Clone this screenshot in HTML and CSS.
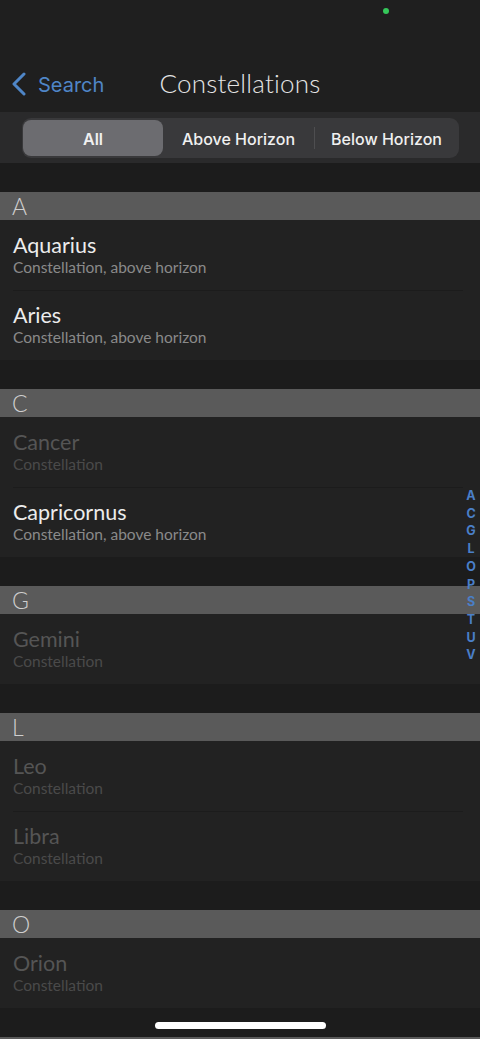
FILE: index.html
```html
<!DOCTYPE html>
<html lang="en">
<head>
<meta charset="utf-8">
<title>Constellations</title>
<link rel="stylesheet" href="styles.css">
</head>
<body>
<div class="screen">
  <div class="status"><span class="dot"></span></div>
  <header class="nav">
    <a class="back">
      <svg class="chevron" width="16" height="24" viewBox="0 0 16 24"><path d="M13 2 L3 12 L13 22" fill="none" stroke="#4f86c7" stroke-width="3" stroke-linecap="round" stroke-linejoin="round"/></svg>
      <span>Search</span>
    </a>
    <h1 class="title">Constellations</h1>
    <span></span>
  </header>
  <div class="toolbar">
    <div class="segmented">
      <div class="seg selected">All</div>
      <div class="seg">Above Horizon</div>
      <div class="divider"></div>
      <div class="seg">Below Horizon</div>
    </div>
  </div>
  <div class="list">
    <section class="section">
      <div class="section-header">A</div>
      <div class="row"><div class="row-title">Aquarius</div><div class="row-sub">Constellation, above horizon</div></div>
      <div class="row"><div class="row-title">Aries</div><div class="row-sub">Constellation, above horizon</div></div>
    </section>
    <section class="section">
      <div class="section-header">C</div>
      <div class="row dim"><div class="row-title">Cancer</div><div class="row-sub">Constellation</div></div>
      <div class="row"><div class="row-title">Capricornus</div><div class="row-sub">Constellation, above horizon</div></div>
    </section>
    <section class="section">
      <div class="section-header">G</div>
      <div class="row dim"><div class="row-title">Gemini</div><div class="row-sub">Constellation</div></div>
    </section>
    <section class="section">
      <div class="section-header">L</div>
      <div class="row dim"><div class="row-title">Leo</div><div class="row-sub">Constellation</div></div>
      <div class="row dim"><div class="row-title">Libra</div><div class="row-sub">Constellation</div></div>
    </section>
    <section class="section">
      <div class="section-header">O</div>
      <div class="row dim"><div class="row-title">Orion</div><div class="row-sub">Constellation</div></div>
    </section>
    <section class="section">
      <div class="section-header"></div>
    </section>
  </div>
  <nav class="index">
    <span>A</span><span>C</span><span>G</span><span>L</span><span>O</span><span>P</span><span>S</span><span>T</span><span>U</span><span>V</span>
  </nav>
  <div class="home-indicator"></div>
</div>
</body>
</html>
```

FILE: styles.css
```css
* { box-sizing: border-box; }
html, body { margin: 0; padding: 0; }
body {
  background: #1c1c1c;
  font-family: Lato, "Noto Sans", sans-serif;
}
.screen {
  position: relative;
  width: 480px;
  height: 1039px;
  overflow: hidden;
  background: #1c1c1c;
}
.status {
  height: 60px;
  background: #1f1f1f;
  display: flex;
  justify-content: flex-end;
  padding: 8px 91px 0 0;
}
.dot {
  width: 6px;
  height: 6px;
  border-radius: 50%;
  background: #35c75a;
}
.nav {
  height: 52px;
  background: #1f1f1f;
  display: grid;
  grid-template-columns: 1fr auto 1fr;
  align-items: center;
  padding-bottom: 6px;
}
.back {
  display: flex;
  align-items: center;
  gap: 11px;
  padding-left: 11px;
  color: #4f86c7;
  font-family: Inter, "Liberation Sans", sans-serif;
  font-size: 20px;
  margin-top: 3px;
}
.chevron { margin-top: -1px; }
.title {
  margin: 0;
  font-family: Lato, sans-serif;
  font-weight: 300;
  font-size: 26px;
  color: #e4e4e4;
  letter-spacing: 0.2px;
}
.toolbar {
  height: 51px;
  background: #2a2a2b;
  padding: 6px 21px 5px 22px;
}
.segmented {
  height: 40px;
  background: #39393b;
  border-radius: 9px;
  padding: 1px;
  display: grid;
  grid-template-columns: 140px 151px 1px 1fr;
  align-items: stretch;
}
.seg {
  display: flex;
  align-items: center;
  justify-content: center;
  color: #f0f0f0;
  font-family: Inter, "Liberation Sans", sans-serif;
  font-size: 16px;
  font-weight: 500;
  padding-top: 1px;
}
.seg.selected {
  background: #6c6c70;
  border-radius: 8px;
  font-weight: 600;
  margin: 1px 0 1px 0;
}
.divider {
  width: 1px;
  height: 22px;
  align-self: center;
  background: #4e4e50;
}
.section {
  padding-top: 29px;
}
.section-header {
  height: 28px;
  background: #5a5a5a;
  color: #cfcfcf;
  font-weight: 300;
  font-size: 23px;
  line-height: 28px;
  padding-left: 12px;
}
.row {
  height: 70px;
  background: #222222;
  padding: 13px 0 0 13px;
  position: relative;
}
.row + .row::before {
  content: "";
  position: absolute;
  top: 0;
  left: 13px;
  right: 17px;
  height: 1px;
  background: #1c1c1c;
}
.row-title {
  font-size: 21.5px;
  line-height: 24px;
  color: #ececec;
}
.row-sub {
  font-size: 15.5px;
  line-height: 18px;
  margin-top: 1px;
  color: #8a8a8a;
}
.row.dim .row-title { color: #555555; }
.row.dim .row-sub { color: #4a4a4a; }
.index {
  position: absolute;
  top: 487px;
  left: 463px;
  width: 16px;
  display: flex;
  flex-direction: column;
  align-items: center;
  font-family: Inter, "Liberation Sans", sans-serif;
  font-weight: 700;
  font-size: 12.5px;
  line-height: 17.7px;
  color: #4a7fc8;
}
.home-indicator {
  position: absolute;
  left: 155px;
  top: 1022px;
  width: 171px;
  height: 7px;
  border-radius: 4px;
  background: #ffffff;
}
```
